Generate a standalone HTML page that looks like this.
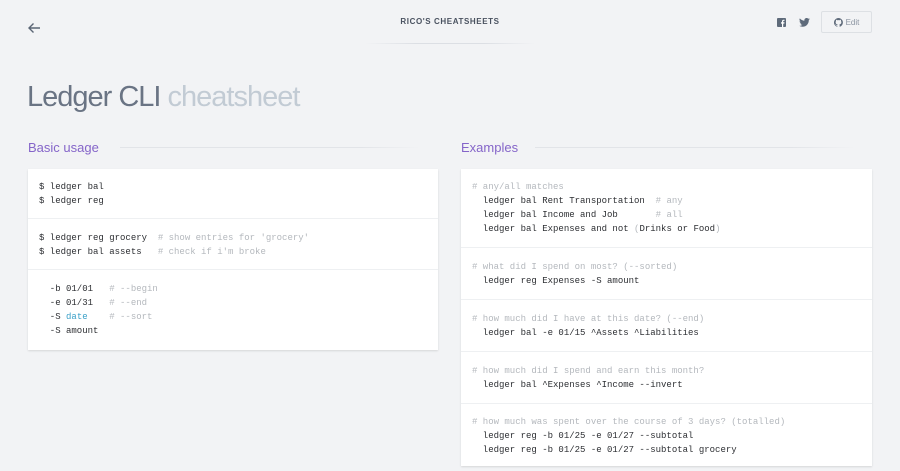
<!DOCTYPE html>
<html><head><style>
*{margin:0;padding:0;box-sizing:border-box}
body{width:900px;height:471px;background:#f2f3f5;font-family:"Liberation Sans",sans-serif;position:relative;overflow:hidden}
.abs{position:absolute}
.brand{left:0;width:900px;top:17px;text-align:center;font-size:8px;font-weight:bold;letter-spacing:.6px;color:#4a5260}
.uline{left:365px;top:43px;width:170px;height:1px;background:linear-gradient(90deg,rgba(220,223,228,0),#dcdfe4 30%,#dcdfe4 70%,rgba(220,223,228,0))}
h1{position:absolute;left:27px;top:81px;font-size:29px;font-weight:300;color:#6a7484;letter-spacing:-1px;font-family:"Liberation Sans",sans-serif}
h1 span{color:#c2cbd4}
h2{position:absolute;font-size:13px;font-weight:normal;color:#8565c9;top:140px}
.hl{position:absolute;top:147px;height:1px;background:linear-gradient(90deg,#e2e4e8,#e2e4e8 80%,rgba(226,228,232,0))}
.panel{position:absolute;background:#fff;box-shadow:0 1px 2px rgba(0,0,0,.12)}
.blk{padding:11px 11px 10px;border-top:1px solid #eef0f2;font-family:"Liberation Mono",monospace;font-size:9px;line-height:14px;color:#2d2f33;white-space:pre}
.r .blk{padding-bottom:11px}
.blk:first-child{border-top:none}
.c{color:#b4b8bd}
.b{color:#3aa0c8}
.edit{left:821px;top:11px;width:51px;height:22px;border:1px solid #dde0e4;border-radius:2px;font-size:8px;color:#8a93a0;display:flex;align-items:center;justify-content:center;gap:3px}
</style></head><body>
<svg class="abs" style="left:27px;top:22px" width="14" height="12" viewBox="0 0 14 12"><path d="M13 6H2M6.5 1.5L2 6l4.5 4.5" stroke="#5b6675" stroke-width="1.4" fill="none"/></svg>
<div class="abs brand">RICO'S CHEATSHEETS</div>
<div class="abs uline"></div>
<svg class="abs" style="left:777px;top:18px" width="9" height="9" viewBox="0 0 9 9"><rect width="9" height="9" rx="1" fill="#5e6a7a"/><path d="M6.2 9V5.6h1.1l.2-1.3H6.2v-.8c0-.4.1-.6.6-.6h.7V1.7H6.6c-1 0-1.6.6-1.6 1.6v1H4v1.3h1V9z" fill="#fff"/></svg>
<svg class="abs" style="left:799px;top:18px" width="11" height="9" viewBox="0 0 24 20"><path d="M24 2.4a10 10 0 0 1-2.8.8A5 5 0 0 0 23.3.4a10 10 0 0 1-3.1 1.2A4.9 4.9 0 0 0 11.8 6 14 14 0 0 1 1.7.9a4.9 4.9 0 0 0 1.5 6.6A4.9 4.9 0 0 1 1 6.9a4.9 4.9 0 0 0 3.9 4.9 5 5 0 0 1-2.2.1 4.9 4.9 0 0 0 4.6 3.4A9.9 9.9 0 0 1 0 17.3 14 14 0 0 0 7.5 19.5c9.1 0 14-7.5 14-14v-.6A10 10 0 0 0 24 2.4z" fill="#5e6a7a"/></svg>
<div class="abs edit"><svg width="9" height="9" viewBox="0 0 16 16"><path fill="#5e6a7a" d="M8 0a8 8 0 0 0-2.5 15.6c.4 0 .5-.2.5-.4v-1.5c-2.2.5-2.7-1-2.7-1-.4-.9-.9-1.2-.9-1.2-.7-.5.1-.5.1-.5.8.1 1.2.8 1.2.8.7 1.3 1.9.9 2.3.7.1-.5.3-.9.5-1.1-1.8-.2-3.6-.9-3.6-4 0-.9.3-1.6.8-2.1-.1-.2-.4-1 .1-2.1 0 0 .7-.2 2.2.8a7.5 7.5 0 0 1 4 0c1.5-1 2.2-.8 2.2-.8.4 1.1.2 1.9.1 2.1.5.6.8 1.3.8 2.1 0 3.1-1.900 3.8-3.7 4 .3.3.6.8.6 1.5v2.2c0 .2.1.5.6.4A8 8 0 0 0 8 0z"/></svg>Edit</div>
<h1>Ledger CLI <span>cheatsheet</span></h1>
<h2 style="left:28px">Basic usage</h2>
<div class="hl" style="left:120px;width:300px"></div>
<h2 style="left:461px">Examples</h2>
<div class="hl" style="left:535px;width:320px"></div>
<div class="panel" style="left:28px;top:169px;width:410px;height:181px">
<div class="blk">$ ledger bal
$ ledger reg</div>
<div class="blk" style="padding-top:12px">$ ledger reg grocery  <span class="c"># show entries for 'grocery'</span>
$ ledger bal assets   <span class="c"># check if i'm broke</span></div>
<div class="blk" style="padding-top:12px">  -b 01/01   <span class="c"># --begin</span>
  -e 01/31   <span class="c"># --end</span>
  -S <span class="b">date</span>    <span class="c"># --sort</span>
  -S amount</div>
</div>
<div class="panel r" style="left:461px;top:169px;width:411px;height:297px">
<div class="blk"><span class="c"># any/all matches</span>
  ledger bal Rent Transportation  <span class="c"># any</span>
  ledger bal Income and Job       <span class="c"># all</span>
  ledger bal Expenses and not <span class="c">(</span>Drinks or Food<span class="c">)</span></div>
<div class="blk" style="padding-top:12px"><span class="c"># what did I spend on most? (--sorted)</span>
  ledger reg Expenses -S amount</div>
<div class="blk" style="padding-top:12px"><span class="c"># how much did I have at this date? (--end)</span>
  ledger bal -e 01/15 ^Assets ^Liabilities</div>
<div class="blk" style="padding-top:12px"><span class="c"># how much did I spend and earn this month?</span>
  ledger bal ^Expenses ^Income --invert</div>
<div class="blk" style="padding-top:11px"><span class="c"># how much was spent over the course of 3 days? (totalled)</span>
  ledger reg -b 01/25 -e 01/27 --subtotal
  ledger reg -b 01/25 -e 01/27 --subtotal grocery</div>
</div>
</body></html>
